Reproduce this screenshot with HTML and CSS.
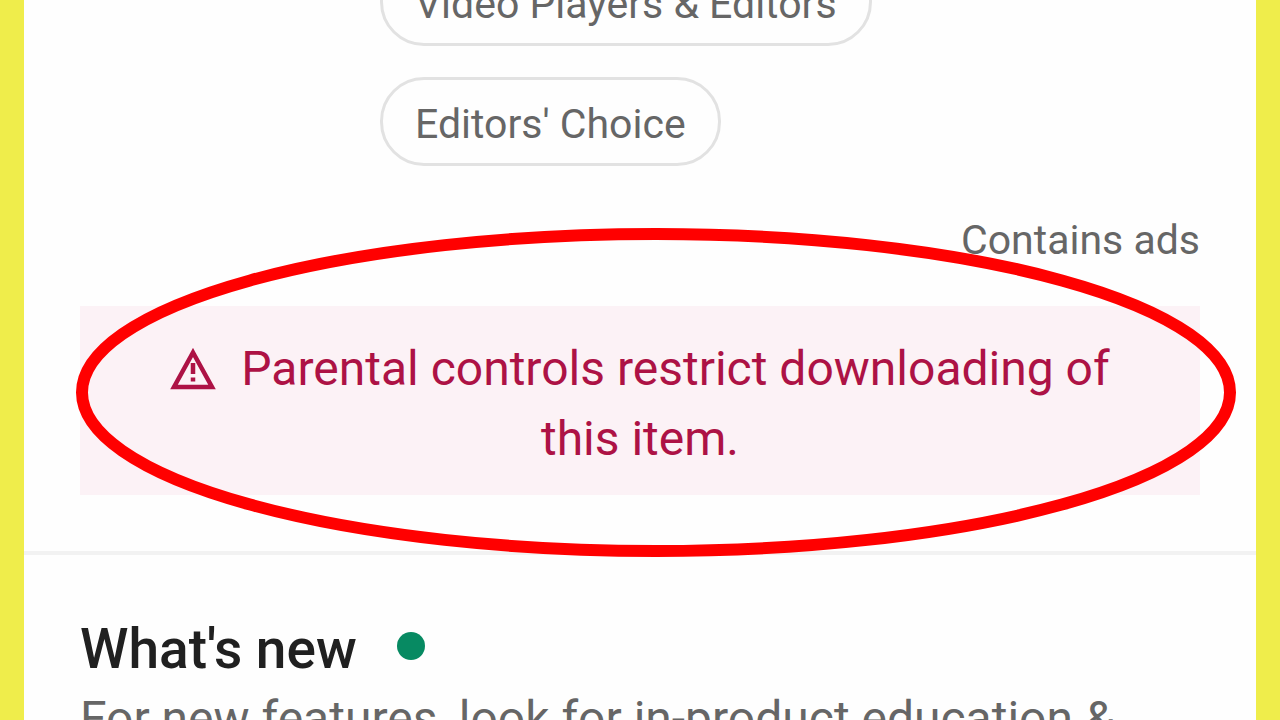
FILE: index.html
```html
<!DOCTYPE html>
<html lang="en">
<head>
<meta charset="utf-8">
<title>App details</title>
<link rel="stylesheet" href="styles.css">
</head>
<body>
<main class="page">
  <section class="details">
    <nav class="tags">
      <a class="tag" href="#">Video Players &amp; Editors</a>
      <a class="tag" href="#">Editors' Choice</a>
    </nav>
    <p class="ads">Contains ads</p>
    <div class="notice" role="alert">
      <p class="notice-text"><svg class="warning" viewBox="0 0 46 42" aria-hidden="true"><path d="M23 4.500 42 39H4Z" fill="none" stroke="currentColor" stroke-width="4.500"/><path d="M23 15v11M23 29.500v4" stroke="currentColor" stroke-width="4.500"/></svg>Parental controls restrict downloading of this item.</p>
      <svg class="ring" viewBox="0 0 1160 329" preserveAspectRatio="none" aria-hidden="true"><ellipse cx="580" cy="164.500" rx="574" ry="158.500"/></svg>
    </div>
  </section>
  <section class="news">
    <h2 class="news-title">What's new<span class="dot"></span></h2>
    <p class="news-text">For new features, look for in-product education &amp;</p>
  </section>
</main>
</body>
</html>
```
FILE: styles.css
```css
* { box-sizing: border-box; }

body {
  margin: 0;
  height: 100vh;
  overflow: hidden;
  background: #efed4b;
  font-family: Roboto, "Liberation Sans", sans-serif;
  color: #666;
}

.page {
  height: 100%;
  margin: 0 24px;
  background: #fefefe;
  overflow: hidden;
}

.details {
  padding: 0 56px 56px;
  border-bottom: 4px solid #f2f2f2;
}

.tags {
  display: flex;
  flex-direction: column;
  align-items: flex-start;
  gap: 31px;
  margin-top: -43px;
  margin-left: 300px;
}

.tag {
  padding: 5px 32px 0;
  border: 3px solid #e2e2e2;
  border-radius: 44px;
  font-size: 41px;
  line-height: 78px;
  color: #666;
  text-decoration: none;
  white-space: nowrap;
}

.ads {
  margin: 50px 0 42px;
  font-size: 41px;
  line-height: 48px;
  text-align: right;
}

.notice {
  position: relative;
  padding: 28px 80px 21px;
  background: #fcf2f6;
  color: #ad1245;
}

.notice-text {
  margin: 0;
  font-size: 48px;
  line-height: 70px;
  text-align: center;
}

.warning {
  width: 46px;
  height: 42px;
  margin-right: 25px;
  vertical-align: -5px;
}

.ring {
  position: absolute;
  top: -78px;
  left: -4px;
  width: calc(100% + 40px);
  height: 329px;
  fill: none;
  stroke: #ff0000;
  stroke-width: 12;
}

.news { padding: 64px 56px 0; }

.news-title {
  display: flex;
  align-items: center;
  gap: 40px;
  margin: 0;
  font-size: 55px;
  font-weight: 500;
  line-height: 60px;
  color: #202020;
}

.dot {
  width: 28px;
  height: 28px;
  margin-bottom: 6px;
  border-radius: 50%;
  background: #078a62;
}

.news-text {
  margin: 13px 0 0;
  font-size: 48px;
  line-height: 54px;
  white-space: nowrap;
}
```
